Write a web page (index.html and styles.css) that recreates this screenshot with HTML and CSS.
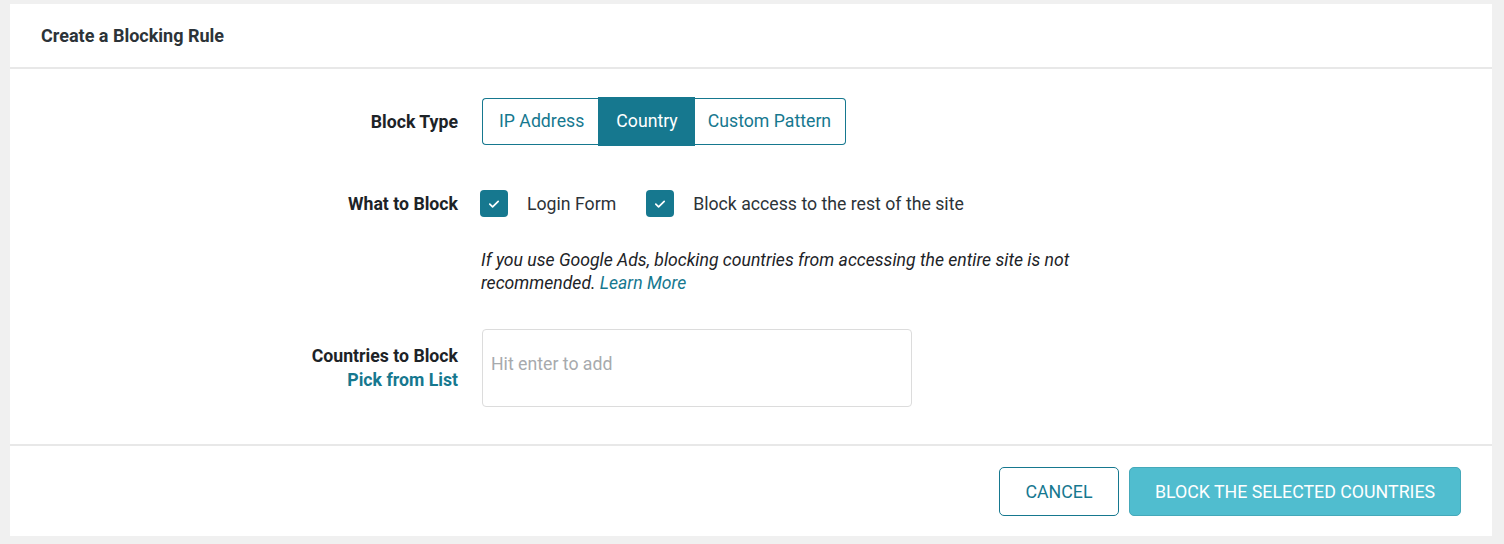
FILE: index.html
```html
<!DOCTYPE html>
<html lang="en">
<head>
    <meta charset="UTF-8">
    <meta name="viewport" content="width=device-width, initial-scale=1.0">
    <title>Create a Blocking Rule</title>
    <link rel="stylesheet" href="styles.css">
</head>
<body>
    <div class="card">
        <div class="card-header">
            <h2>Create a Blocking Rule</h2>
        </div>

        <div class="card-body">
            <div class="row row-type">
                <div class="label">Block Type</div>
                <div class="segmented">
                    <button class="seg">IP Address</button>
                    <button class="seg active">Country</button>
                    <button class="seg">Custom Pattern</button>
                </div>
            </div>

            <div class="row row-what">
                <div class="label">What to Block</div>
                <div class="checks">
                    <label class="check">
                        <span class="box">
                            <svg width="14" height="14" viewBox="0 0 14 14"><path d="M2.8 7.2l2.8 2.7L11.2 4.3" fill="none" stroke="#fff" stroke-width="1.7" stroke-linecap="round" stroke-linejoin="round"/></svg>
                        </span>
                        Login Form
                    </label>
                    <label class="check">
                        <span class="box">
                            <svg width="14" height="14" viewBox="0 0 14 14"><path d="M2.8 7.2l2.8 2.7L11.2 4.3" fill="none" stroke="#fff" stroke-width="1.7" stroke-linecap="round" stroke-linejoin="round"/></svg>
                        </span>
                        Block access to the rest of the site
                    </label>
                </div>
            </div>

            <div class="row row-note">
                <div></div>
                <p class="note">If you use Google Ads, blocking countries from accessing the entire site is not recommended. <a href="#">Learn More</a></p>
            </div>

            <div class="row row-countries">
                <div class="label">
                    Countries to Block<br>
                    <a href="#" class="pick">Pick from List</a>
                </div>
                <div class="tags">
                    <input type="text" placeholder="Hit enter to add">
                </div>
            </div>
        </div>

        <div class="card-footer">
            <button class="btn btn-outline">Cancel</button>
            <button class="btn btn-primary">Block the Selected Countries</button>
        </div>
    </div>
</body>
</html>
```

FILE: styles.css
```css
body {
    margin: 0;
    font-family: Roboto, "Liberation Sans", sans-serif;
    background: #f0f0f0;
    color: #1d2327;
    padding: 4px 12px 8px 10px;
}

.card {
    background: #fff;
    height: 532px;
    display: flex;
    flex-direction: column;
}

.card-header {
    height: 65px;
    border-bottom: 2px solid #e8e8e8;
    display: flex;
    align-items: center;
    padding-left: 31px;
    box-sizing: border-box;
}

.card-header h2 {
    margin: 0;
    font-size: 18px;
    font-weight: 700;
    color: #2c3338;
}

.card-body {
    flex: 1;
    padding-top: 29px;
    border-bottom: 2px solid #e8e8e8;
}

.row {
    display: grid;
    grid-template-columns: 448px 1fr;
    column-gap: 24px;
    align-items: center;
}

.label {
    text-align: right;
    font-size: 17.7px;
    font-weight: 700;
    line-height: 24px;
}

.segmented {
    display: flex;
    align-self: start;
}

.seg {
    font-family: inherit;
    font-size: 17.7px;
    color: #16788f;
    background: #fff;
    border: 1px solid #16788f;
    height: 47px;
    padding: 0 14px 2px 16px;
    margin: 0;
    cursor: pointer;
}

.seg:first-child {
    border-radius: 4px 0 0 4px;
    border-right: none;
}

.seg:last-child {
    border-radius: 0 4px 4px 0;
    border-left: none;
    padding: 0 14px 2px 13px;
}

.seg.active {
    background: #16788f;
    color: #fff;
    height: 49px;
    margin-top: -1px;
    padding: 0 16px 2px 17px;
}

.row-what {
    margin-top: 44px;
}

.checks {
    display: flex;
    gap: 30px;
    margin-left: -2px;
}

.check {
    display: flex;
    align-items: center;
    gap: 19px;
    font-size: 17.7px;
    color: #2c3338;
}

.box {
    width: 28px;
    height: 27px;
    border-radius: 4px;
    background: #16788f;
    display: flex;
    align-items: center;
    justify-content: center;
}

.row-note {
    margin-top: 31px;
}

.note {
    margin: 0;
    font-size: 17.6px;
    font-style: italic;
    line-height: 23px;
    color: #1d2327;
    max-width: 620px;
    margin-left: -1px;
    padding-top: 1px;
}

.note a {
    color: #16788f;
    text-decoration: none;
}

.row-countries {
    margin-top: 34px;
    align-items: start;
}

.row-countries .label {
    padding-top: 15px;
}

.pick {
    color: #16788f;
    text-decoration: none;
}

.tags {
    width: 430px;
    height: 78px;
    border: 1px solid #dcdcdc;
    border-radius: 4px;
    box-sizing: border-box;
    padding: 24px 8px 0;
}

.tags input {
    border: none;
    outline: none;
    font-family: inherit;
    font-size: 17.7px;
    padding: 0;
    width: 100%;
    color: #333;
}

.tags input::placeholder {
    color: #a7aaad;
}

.card-footer {
    height: 90px;
    display: flex;
    align-items: center;
    justify-content: flex-end;
    gap: 10px;
    padding-right: 31px;
}

.btn {
    font-family: inherit;
    font-size: 17.8px;
    text-transform: uppercase;
    height: 49px;
    border-radius: 5px;
    cursor: pointer;
}

.btn-outline {
    background: #fff;
    color: #16788f;
    border: 1px solid #16788f;
    width: 120px;
}

.btn-primary {
    background: #50bdcf;
    color: #fff;
    border: 1px solid #45a9ba;
    width: 332px;
}
```
